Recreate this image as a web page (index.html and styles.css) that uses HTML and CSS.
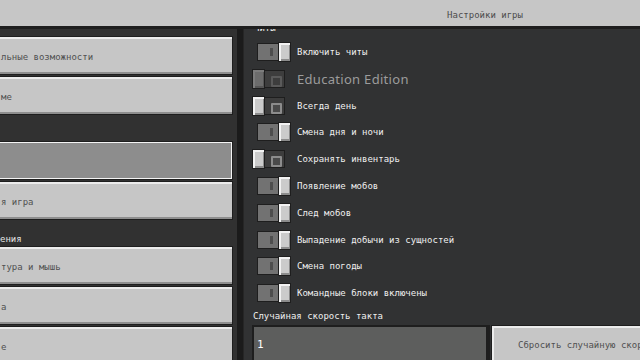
FILE: index.html
```html
<!DOCTYPE html>
<html lang="ru">
<head>
    <meta charset="UTF-8">
    <meta name="viewport" content="width=device-width, initial-scale=1.0">
    <title>Настройки игры</title>
    <link rel="stylesheet" href="styles.css">
</head>
<body>
    <!-- Header -->
    <header class="topbar">
        <h1 class="title">Настройки игры</h1>
    </header>

    <div class="main">
        <!-- Left navigation -->
        <nav class="sidebar">
            <button class="nav-btn">льные возможности</button>
            <button class="nav-btn">ме</button>
            <div class="nav-header"></div>
            <button class="nav-btn selected"></button>
            <button class="nav-btn">я игра</button>
            <div class="nav-header">ения</div>
            <button class="nav-btn">тура и мышь</button>
            <button class="nav-btn">а</button>
            <button class="nav-btn">е</button>
        </nav>

        <!-- Settings list -->
        <section class="content">
            <div class="section-title">Читы</div>

            <div class="toggles">
                <div class="row">
                    <div class="switch on"><span class="knob"></span></div>
                    <span class="label">Включить читы</span>
                </div>
                <div class="row">
                    <div class="switch off disabled"><span class="knob"></span></div>
                    <span class="label edu">Education Edition</span>
                </div>
                <div class="row">
                    <div class="switch off"><span class="knob"></span></div>
                    <span class="label">Всегда день</span>
                </div>
                <div class="row">
                    <div class="switch on"><span class="knob"></span></div>
                    <span class="label">Смена дня и ночи</span>
                </div>
                <div class="row">
                    <div class="switch off"><span class="knob"></span></div>
                    <span class="label">Сохранять инвентарь</span>
                </div>
                <div class="row">
                    <div class="switch on"><span class="knob"></span></div>
                    <span class="label">Появление мобов</span>
                </div>
                <div class="row">
                    <div class="switch on"><span class="knob"></span></div>
                    <span class="label">След мобов</span>
                </div>
                <div class="row">
                    <div class="switch on"><span class="knob"></span></div>
                    <span class="label">Выпадение добычи из сущностей</span>
                </div>
                <div class="row">
                    <div class="switch on"><span class="knob"></span></div>
                    <span class="label">Смена погоды</span>
                </div>
                <div class="row">
                    <div class="switch on"><span class="knob"></span></div>
                    <span class="label">Командные блоки включены</span>
                </div>
            </div>

            <div class="field-label">Случайная скорость такта</div>
            <div class="field-row">
                <div class="text-input">1</div>
                <button class="reset-btn">Сбросить случайную скор</button>
            </div>
        </section>
    </div>
</body>
</html>
```

FILE: styles.css
```css
/* General Reset */
* {
    box-sizing: border-box;
    margin: 0;
    padding: 0;
}
body {
    width: 640px;
    height: 360px;
    overflow: hidden;
    background: #313131;
    font-family: "DejaVu Sans Mono", "Liberation Mono", monospace;
    font-size: 9px;
}
button {
    font-family: inherit;
    font-size: inherit;
    text-align: left;
    cursor: pointer;
}

/* Top bar */
.topbar {
    height: 29px;
    background: #c6c6c6;
    border-bottom: 3px solid #1e1e1e;
    display: flex;
    align-items: center;
    justify-content: center;
    padding-left: 330px;
}
.title {
    font-size: 9px;
    font-weight: normal;
    color: #4c4c4c;
    padding-top: 3px;
}

.main {
    display: flex;
    height: 331px;
}

/* Sidebar */
.sidebar {
    width: 243px;
    padding: 7px 4px 0 0;
    border-right: 6px solid #1b1b1b;
    box-shadow: inset -3px 0 #313131;
    display: flex;
    flex-direction: column;
    overflow: hidden;
}
.nav-btn {
    flex: none;
    height: 39px;
    width: 233px;
    margin-bottom: 1px;
    padding: 3px 0 0 1px;
    background: #c6c6c6;
    color: #505050;
    border: 1px solid #1e1e1e;
    border-left: none;
    box-shadow: inset 0 2px #ececec, inset 0 -2px #8e8e8e;
    white-space: nowrap;
}
.nav-btn.selected {
    background: #8d8d8d;
    border-color: #1e1e1e;
    box-shadow: inset 0 1px #f4f4f4, inset -1px -1px #f4f4f4;
}
.nav-header {
    flex: none;
    height: 25px;
    color: #e4e4e4;
    padding-top: 13px;
    white-space: nowrap;
}

/* Right panel */
.content {
    flex: 1;
    padding-left: 8px;
    background: #313233;
    border-left: 1px solid #262626;
    overflow: hidden;
    color: #efefef;
}
.section-title {
    height: 10px;
    line-height: 10px;
    margin-top: -6px;
    margin-left: 2px;
}
.toggles {
    margin-top: 5.6px;
}
.row {
    height: 26.8px;
    display: flex;
    align-items: center;
    padding-left: 5px;
}
.label {
    margin-left: 12px;
    white-space: nowrap;
}
.label.edu {
    font-family: "Noto Sans", "Open Sans", sans-serif;
    font-size: 13px;
    color: #9c9c9c;
    letter-spacing: 0.3px;
}

/* Toggle switch */
.switch {
    position: relative;
    width: 28px;
    height: 18px;
    border: 1px solid #1e1e1e;
}
.switch.on {
    background: #727272;
}
.switch.on::before {
    content: "";
    position: absolute;
    left: 12px;
    top: 4px;
    width: 3px;
    height: 8px;
    background: #4e4e4e;
}
.switch.off {
    background: #3d3d3d;
}
.switch.off::before {
    content: "";
    position: absolute;
    left: 13px;
    top: 5px;
    width: 7px;
    height: 7px;
    border: 2px solid #8c8c8c;
    border-radius: 1px;
    background: #4a4a4a;
}
.switch.disabled::before {
    border-color: #5a5a5a;
    background: #3d3d3d;
}
.knob {
    position: absolute;
    top: -2px;
    width: 13px;
    height: 20px;
    background: #cbcbcb;
    border: 1px solid #1e1e1e;
    box-shadow: inset 2px 2px #f2f2f2, inset -1px -2px #8c8c8c;
}
.switch.on .knob {
    left: 20px;
}
.switch.off .knob {
    left: -6px;
}
.switch.disabled .knob {
    background: #6c6c6c;
    box-shadow: inset 2px 2px #7c7c7c, inset -1px -2px #555555;
}

/* Tick speed field */
.field-label {
    margin-top: 3.4px;
    height: 12px;
    line-height: 12px;
    margin-left: 1px;
    white-space: nowrap;
}
.field-row {
    display: flex;
    margin-top: 3px;
    height: 40px;
}
.text-input {
    width: 238px;
    background: #5d5e5d;
    border: 2px solid #1e1e1e;
    border-right-width: 4px;
    color: #ffffff;
    font-size: 11px;
    padding: 11px 0 0 3px;
}
.reset-btn {
    flex: 1;
    background: #c6c6c6;
    color: #505050;
    border: 1px solid #1e1e1e;
    border-right: none;
    box-shadow: inset 2px 2px #ececec;
    padding: 0 0 0 26px;
    white-space: nowrap;
    overflow: hidden;
    margin-left: 1px;
}
```
